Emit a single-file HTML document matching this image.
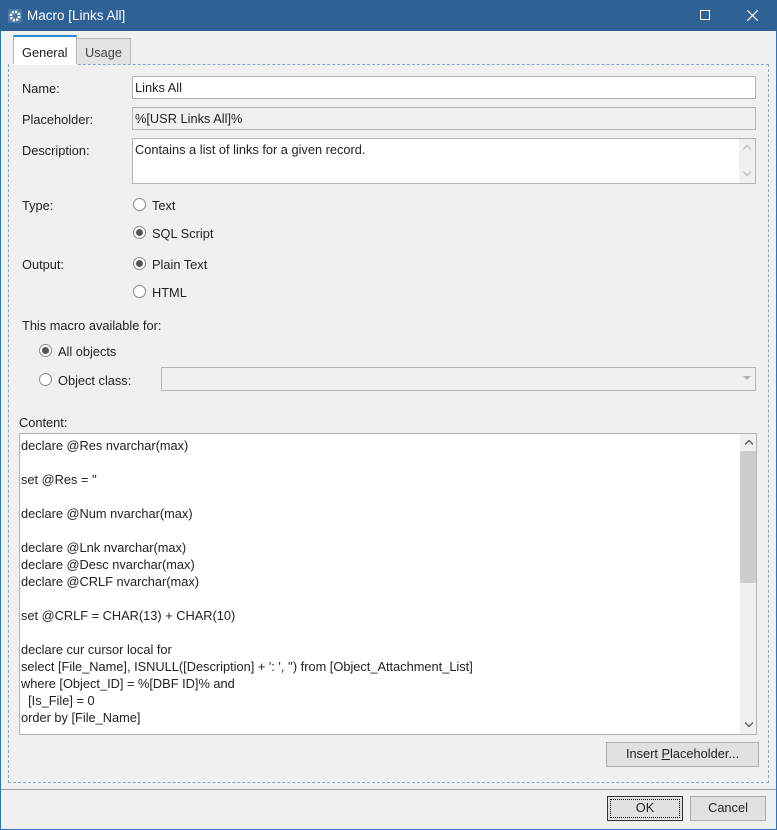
<!DOCTYPE html>
<html><head><meta charset="utf-8"><style>
*{margin:0;padding:0;box-sizing:border-box}
body{width:777px;height:830px;background:#f0f0f0;font-family:"Liberation Sans",sans-serif;font-size:12.8px;color:#222;position:relative;overflow:hidden}
.a{position:absolute}
.win{left:0;top:0;width:777px;height:830px;border:1px solid #2a74c4;border-top:none}
.title{left:0;top:0;width:777px;height:31px;background:#2e6195;color:#fff;font-size:13.5px}
.inp{background:#fff;border:1px solid #b4b4b4;padding:3px 0 0 2px;height:23px}
.lbl{line-height:15px}
.radio{width:13px;height:13px;border:1px solid #8a8a8a;border-radius:50%;background:#fff}
.radio.on::after{content:"";position:absolute;left:2px;top:2px;width:7px;height:7px;border-radius:50%;background:#555}
.btn{border:1px solid #adadad;background:#e1e1e1;text-align:center;line-height:22px;height:25px}
.sb{background:#f0f0f0}
.code div{height:17px;line-height:17px;white-space:pre}
</style></head><body>
<div class="a win"></div>
<div class="a title">
 <svg class="a" style="left:8px;top:9px" width="14" height="14" viewBox="0 0 14 14"><rect width="14" height="14" rx="2" fill="#4d7aa6"/><circle cx="7" cy="7" r="4.2" fill="none" stroke="#fff" stroke-width="2.6" stroke-dasharray="2 1.3"/><circle cx="7" cy="7" r="1.3" fill="#4d7aa6"/></svg>
 <div class="a" style="left:27px;top:8px">Macro [Links All]</div>
 <div class="a" style="left:700px;top:10px;width:10px;height:10px;border:1px solid #fff"></div>
 <svg class="a" style="left:747px;top:10px" width="11" height="11"><path d="M0 0L11 11M11 0L0 11" stroke="#fff" stroke-width="1.2"/></svg>
</div>
<div class="a" style="left:76px;top:38px;width:55px;height:26px;background:#e3e3e3;border:1px solid #b8b8b8;border-bottom:none"></div>
<div class="a" style="left:85px;top:45px;color:#444">Usage</div>
<div class="a" style="left:13px;top:35px;width:64px;height:30px;background:#fff;border:1px solid #b8b8b8;border-top:2px solid #2a8ad8;border-bottom:none"></div>
<div class="a" style="left:22px;top:45px">General</div>
<div class="a" style="left:8px;top:64px;width:761px;height:719px;border:1px dashed #8aa6c8"></div>
<div class="a" style="left:9px;top:64px;width:68px;height:1px;background:#fff"></div>

<div class="a lbl" style="left:22px;top:81px">Name:</div>
<div class="a inp" style="left:132px;top:76px;width:624px">Links All</div>
<div class="a lbl" style="left:22px;top:112px">Placeholder:</div>
<div class="a inp" style="left:132px;top:107px;width:624px;background:#f0f0f0">%[USR Links All]%</div>
<div class="a lbl" style="left:22px;top:143px">Description:</div>
<div class="a inp" style="left:132px;top:138px;width:624px;height:46px">Contains a list of links for a given record.</div>
<div class="a sb" style="left:739px;top:139px;width:16px;height:44px"></div>
<svg class="a" style="left:743px;top:145px" width="8" height="5"><path d="M0 4.5L4 .5L8 4.5" fill="none" stroke="#c0c0c0" stroke-width="1.3"/></svg>
<svg class="a" style="left:743px;top:171px" width="8" height="5"><path d="M0 .5L4 4.5L8 .5" fill="none" stroke="#c0c0c0" stroke-width="1.3"/></svg>

<div class="a lbl" style="left:22px;top:198px">Type:</div>
<div class="a radio" style="left:133px;top:198px"></div><div class="a lbl" style="left:152px;top:198px">Text</div>
<div class="a radio on" style="left:133px;top:226px"></div><div class="a lbl" style="left:152px;top:226px">SQL Script</div>
<div class="a lbl" style="left:22px;top:257px">Output:</div>
<div class="a radio on" style="left:133px;top:257px"></div><div class="a lbl" style="left:152px;top:257px">Plain Text</div>
<div class="a radio" style="left:133px;top:285px"></div><div class="a lbl" style="left:152px;top:285px">HTML</div>
<div class="a lbl" style="left:22px;top:318px">This macro available for:</div>
<div class="a radio on" style="left:39px;top:344px"></div><div class="a lbl" style="left:58px;top:344px">All objects</div>
<div class="a radio" style="left:39px;top:373px"></div><div class="a lbl" style="left:58px;top:373px">Object class:</div>
<div class="a" style="left:161px;top:367px;width:595px;height:24px;border:1px solid #b4b4b4;background:#f0f0f0"></div>
<svg class="a" style="left:743px;top:376px" width="8" height="5"><path d="M0 0h8L4 4z" fill="#b0b0b0"/></svg>

<div class="a lbl" style="left:19px;top:415px">Content:</div>
<div class="a" style="left:19px;top:433px;width:738px;height:302px;background:#fff;border:1px solid #b4b4b4;overflow:hidden">
 <div class="a code" style="left:1px;top:3px">
<div>declare @Res nvarchar(max)</div><div></div><div>set @Res = ''</div><div></div><div>declare @Num nvarchar(max)</div><div></div><div>declare @Lnk nvarchar(max)</div><div>declare @Desc nvarchar(max)</div><div>declare @CRLF nvarchar(max)</div><div></div><div>set @CRLF = CHAR(13) + CHAR(10)</div><div></div><div>declare cur cursor local for</div><div>select [File_Name], ISNULL([Description] + ': ', '') from [Object_Attachment_List]</div><div>where [Object_ID] = %[DBF ID]% and</div><div>  [Is_File] = 0</div><div>order by [File_Name]</div>
 </div>
 <div class="a sb" style="left:720px;top:0;width:17px;height:300px"></div>
 <div class="a" style="left:720px;top:17px;width:17px;height:132px;background:#cdcdcd"></div>
 <svg class="a" style="left:725px;top:6px" width="8" height="5"><path d="M0 4.5L4 .5L8 4.5" fill="none" stroke="#606060" stroke-width="1.5"/></svg>
 <svg class="a" style="left:725px;top:288px" width="8" height="5"><path d="M0 .5L4 4.5L8 .5" fill="none" stroke="#606060" stroke-width="1.5"/></svg>
</div>
<div class="a btn" style="left:606px;top:742px;width:153px">Insert <u>P</u>laceholder...</div>

<div class="a" style="left:1px;top:789px;width:775px;height:1px;background:#a0a0a0"></div>
<div class="a btn" style="left:607px;top:796px;width:76px;border:1px solid #333;outline:1px dotted #000;outline-offset:-4px">OK</div>
<div class="a btn" style="left:690px;top:796px;width:76px">Cancel</div>
</body></html>
